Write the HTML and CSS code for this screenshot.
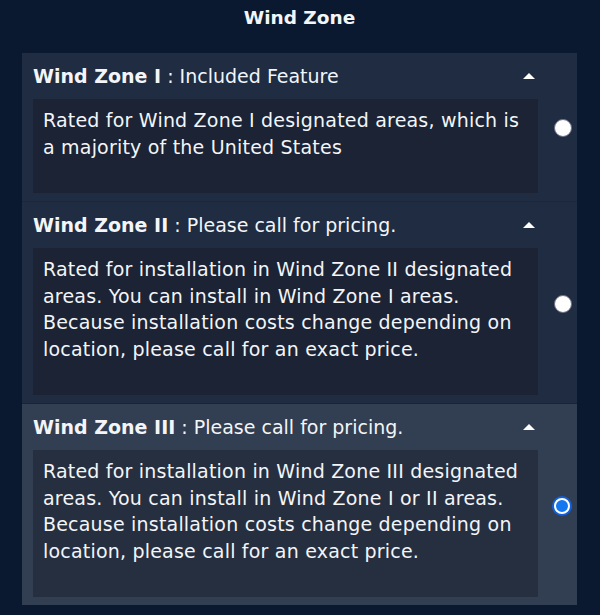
FILE: index.html
```html
<!DOCTYPE html>
<html lang="en">
<head>
    <meta charset="UTF-8">
    <meta name="viewport" content="width=device-width, initial-scale=1.0">
    <title>Wind Zone</title>
    <link rel="stylesheet" href="styles.css">
</head>
<body>
    <h2 class="title">Wind Zone</h2>
    <div class="options">
        <div class="option">
            <div class="option-body">
                <div class="option-head">
                    <span><b>Wind Zone I</b> : Included Feature</span>
                    <span class="caret"></span>
                </div>
                <div class="option-desc">Rated for Wind Zone I designated areas, which is a majority of the United States</div>
            </div>
            <div class="radio-cell"><span class="radio"></span></div>
        </div>
        <div class="option">
            <div class="option-body">
                <div class="option-head">
                    <span><b>Wind Zone II</b> : Please call for pricing.</span>
                    <span class="caret"></span>
                </div>
                <div class="option-desc">Rated for installation in Wind Zone II designated areas. You can install in Wind Zone I areas. Because installation costs change depending on location, please call for an exact price.</div>
            </div>
            <div class="radio-cell"><span class="radio"></span></div>
        </div>
        <div class="option selected">
            <div class="option-body">
                <div class="option-head">
                    <span><b>Wind Zone III</b> : Please call for pricing.</span>
                    <span class="caret"></span>
                </div>
                <div class="option-desc">Rated for installation in Wind Zone III designated areas. You can install in Wind Zone I or II areas. Because installation costs change depending on location, please call for an exact price.</div>
            </div>
            <div class="radio-cell"><span class="radio checked"></span></div>
        </div>
    </div>
</body>
</html>
```

FILE: styles.css
```css
body {
    margin: 0;
    padding: 0 23px 9px 22px;
    background-color: #0a1930;
    font-family: "DejaVu Sans", sans-serif;
    color: #f3f5f8;
}
.title {
    margin: 0;
    height: 53px;
    line-height: 36px;
    text-align: center;
    font-size: 18.5px;
    font-weight: bold;
}
.option {
    display: flex;
    padding: 0 0 8px 11px;
    background-color: #1f2c42;
    border-top: 1px solid #1a273c;
}
.option:first-child {
    border-top: none;
}
.option.selected {
    background-color: #323e52;
    border-top-color: #182438;
}
.option-body {
    width: 505px;
}
.option-head {
    display: flex;
    justify-content: space-between;
    align-items: center;
    height: 46px;
    padding-bottom: 1px;
    box-sizing: border-box;
    font-size: 19px;
}
.caret {
    width: 0;
    height: 0;
    margin-right: 3px;
    border-left: 6px solid transparent;
    border-right: 6px solid transparent;
    border-bottom: 6px solid #ffffff;
}
.option-desc {
    padding: 8px 10px 33px;
    background-color: #1b2335;
    font-size: 19px;
    letter-spacing: 0.2px;
    line-height: 26.5px;
}
.selected .option-desc {
    background-color: #262f40;
}
.radio-cell {
    flex: 1;
    display: flex;
    align-items: center;
    padding: 10px 0 0 16px;
}
.radio {
    width: 16px;
    height: 16px;
    border-radius: 50%;
    background-color: #ffffff;
    border: 1px solid #6b7180;
}
.radio.checked {
    width: 12px;
    height: 12px;
    background-color: #1277f0;
    border: 2px solid #ffffff;
    box-shadow: 0 0 0 2px #1260d8;
}
```
